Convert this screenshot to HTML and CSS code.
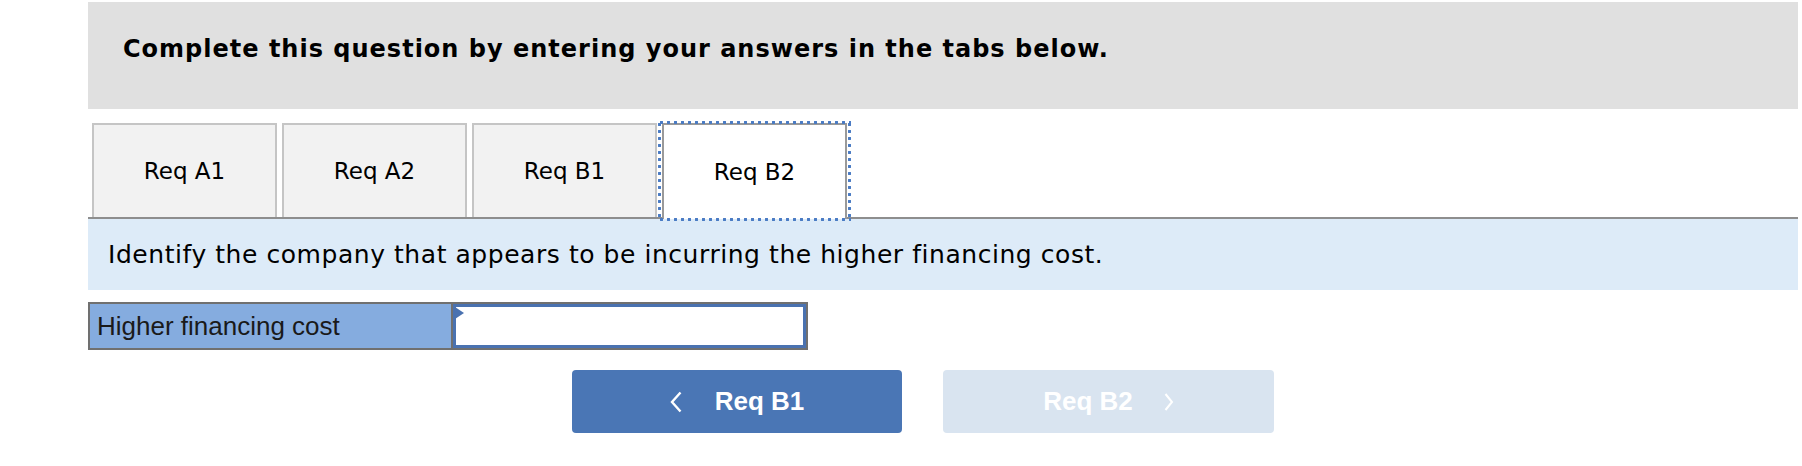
FILE: index.html
```html
<!DOCTYPE html>
<html lang="en">
<head>
<meta charset="UTF-8" />
<title>Req B2</title>
<link rel="stylesheet" href="styles.css">
</head>
<body>
  <div class="wrap">
    <div class="intro">
      <h2>Complete this question by entering your answers in the tabs below.</h2>
    </div>

    <div class="tabs" role="tablist">
      <button class="tab" role="tab">Req A1</button>
      <button class="tab" role="tab">Req A2</button>
      <button class="tab" role="tab">Req B1</button>
      <button class="tab active" role="tab" aria-selected="true">Req B2</button>
    </div>

    <div class="prompt">Identify the company that appears to be incurring the higher financing cost.</div>

    <div class="answer-row">
      <div class="answer-label">Higher financing cost</div>
      <div class="answer-cell">
        <span class="flag"></span>
        <input type="text" class="answer-input" aria-label="Higher financing cost">
      </div>
    </div>

    <div class="nav">
      <button class="nav-btn prev">
        <svg width="12" height="22" viewBox="0 0 12 22" aria-hidden="true"><path d="M10.5 1.5 L2 11 L10.5 20.5" fill="none" stroke="#fff" stroke-width="2.4"/></svg>
        <span>Req B1</span>
      </button>
      <button class="nav-btn next" disabled>
        <span>Req B2</span>
        <svg width="10" height="22" viewBox="0 0 10 22" aria-hidden="true"><path d="M1.5 3 L8 11 L1.5 19" fill="none" stroke="#fff" stroke-width="2"/></svg>
      </button>
    </div>
  </div>
</body>
</html>
```

FILE: styles.css
```css
* {
  box-sizing: border-box;
}

body {
  margin: 0;
  background: #fff;
  color: #000;
  font-family: "DejaVu Sans", Verdana, sans-serif;
}

.wrap {
  margin: 2px 4px 0 88px;
}

/* grey intro bar */
.intro {
  background: #e0e0e0;
  height: 107px;
  padding: 33px 0 0 35px;
}

.intro h2 {
  margin: 0;
  font-size: 24px;
  font-weight: 700;
  letter-spacing: 1px;
  line-height: 28px;
}

/* tab strip */
.tabs {
  display: flex;
  gap: 5px;
  align-items: flex-end;
  margin-top: 14px;
  padding-left: 4px;
  border-bottom: 2px solid #8e8e8e;
  height: 96px;
}

.tab {
  width: 185px;
  height: 94px;
  background: #f2f2f2;
  border: 2px solid #c5c5c5;
  border-bottom: none;
  font-family: inherit;
  font-size: 23px;
  color: #000;
  padding: 0;
  cursor: pointer;
}

.tab.active {
  position: relative;
  background: #fff;
  border-color: #9a9a9a;
  height: 96px;
  margin-bottom: -2px;
}

/* dotted focus ring, sparse round dots */
.tab.active::after {
  content: "";
  position: absolute;
  top: -4px;
  left: -6px;
  right: -6px;
  bottom: -2px;
  pointer-events: none;
  background:
    radial-gradient(circle at 3.5px 1.5px, #4a7bc4 1.4px, transparent 1.7px) left top / 7px 3px repeat-x,
    radial-gradient(circle at 3.5px 1.5px, #4a7bc4 1.4px, transparent 1.7px) left bottom / 7px 3px repeat-x,
    radial-gradient(circle at 1.5px 3.5px, #4a7bc4 1.4px, transparent 1.7px) left top / 3px 7px repeat-y,
    radial-gradient(circle at 1.5px 3.5px, #4a7bc4 1.4px, transparent 1.7px) right top / 3px 7px repeat-y;
}

/* instruction band */
.prompt {
  background: #ddebf8;
  height: 71px;
  padding: 0 0 0 20px;
  display: flex;
  align-items: center;
  font-size: 25px;
  letter-spacing: 0.55px;
}

/* answer table */
.answer-row {
  display: flex;
  width: 720px;
  height: 48px;
  margin-top: 12px;
  border: 2px solid #707070;
  font-family: "Liberation Sans", Arial, sans-serif;
}

.answer-label {
  width: 363px;
  background: #85acdf;
  border-right: 2px solid #707070;
  font-size: 26px;
  color: #1a1a1a;
  padding-left: 7px;
  display: flex;
  align-items: center;
}

.answer-cell {
  flex: 1;
  position: relative;
}

.answer-input {
  display: block;
  width: 100%;
  height: 100%;
  border: 3px solid #4a72b0;
  background: #fff;
  outline: none;
}

.flag {
  position: absolute;
  left: 2px;
  top: 3px;
  width: 0;
  height: 0;
  border-top: 6px solid transparent;
  border-bottom: 6px solid transparent;
  border-left: 9px solid #4a72b0;
}

/* prev / next buttons */
.nav {
  display: flex;
  gap: 41px;
  margin-top: 20px;
  padding-left: 484px;
}

.nav-btn {
  height: 63px;
  border: none;
  border-radius: 4px;
  display: flex;
  align-items: center;
  justify-content: center;
  gap: 33px;
  color: #fff;
  font-family: "Liberation Sans", Arial, sans-serif;
  font-size: 26px;
  font-weight: 700;
  padding: 0;
  cursor: pointer;
}

.nav-btn.prev {
  width: 330px;
  background: #4a76b5;
}

.nav-btn.next {
  width: 331px;
  gap: 31px;
  background: #d9e4f0;
  cursor: default;
}
```
